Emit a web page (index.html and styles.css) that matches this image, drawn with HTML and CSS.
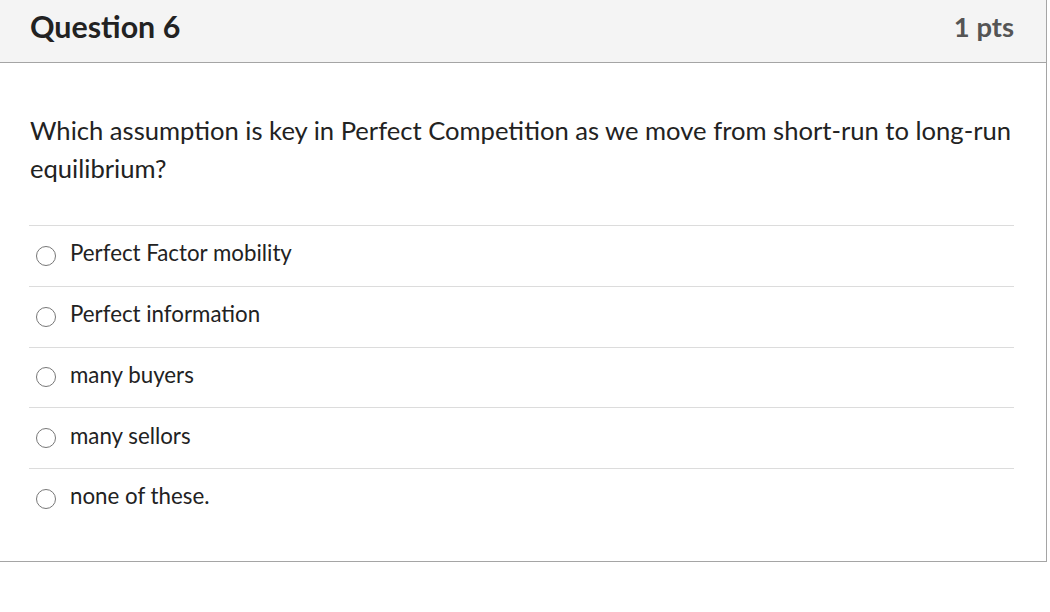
FILE: index.html
```html
<!DOCTYPE html>
<html>
<head>
<meta charset="utf-8">
<link rel="stylesheet" href="styles.css">
</head>
<body>
<div class="quiz">
  <div class="quiz-header">
    <h2 class="quiz-title">Question 6</h2>
    <div class="quiz-points">1 pts</div>
  </div>
  <div class="quiz-body">
    <p class="question">Which assumption is key in Perfect Competition as we move from short-run to long-run equilibrium?</p>
    <div class="answers">
      <label class="answer"><span class="radio"></span><span class="answer-text">Perfect Factor mobility</span></label>
      <label class="answer"><span class="radio"></span><span class="answer-text">Perfect information</span></label>
      <label class="answer"><span class="radio"></span><span class="answer-text">many buyers</span></label>
      <label class="answer"><span class="radio"></span><span class="answer-text">many sellors</span></label>
      <label class="answer"><span class="radio"></span><span class="answer-text">none of these.</span></label>
    </div>
  </div>
</div>
</body>
</html>
```

FILE: styles.css
```css
html, body {
  margin: 0;
  padding: 0;
  background: #fff;
}
body {
  font-family: Lato, "Open Sans", "Liberation Sans", sans-serif;
  color: #2d3b45;
}
.quiz {
  width: 1047px;
  box-sizing: border-box;
  border-right: 1px solid #a5a5a5;
  border-bottom: 1px solid #a5a5a5;
}
.quiz-header {
  height: 63px;
  box-sizing: border-box;
  background: #f4f4f4;
  border-bottom: 1px solid #a5a5a5;
  display: flex;
  align-items: center;
  justify-content: space-between;
  padding: 0 32px 10px 30px;
}
.quiz-title {
  margin: 0;
  font-size: 30.4px;
  font-weight: 700;
  color: #222;
}
.quiz-points {
  font-size: 27.4px;
  font-weight: 700;
  color: #555;
}
.quiz-body {
  padding: 48px 32px 32px 29px;
}
.question {
  margin: 0 0 38px 1px;
  font-size: 25.6px;
  line-height: 38px;
  color: #222;
}
.answer {
  display: flex;
  align-items: center;
  height: 60.75px;
  border-top: 1px solid #dcdcdc;
  box-sizing: border-box;
  padding-left: 7px;
}
.radio {
  width: 20px;
  height: 20px;
  box-sizing: border-box;
  border: 1.5px solid #777;
  border-radius: 50%;
  margin-right: 14px;
  flex: none;
}
.answer-text {
  font-size: 22.3px;
  color: #222;
  margin-bottom: 6px;
}
```
